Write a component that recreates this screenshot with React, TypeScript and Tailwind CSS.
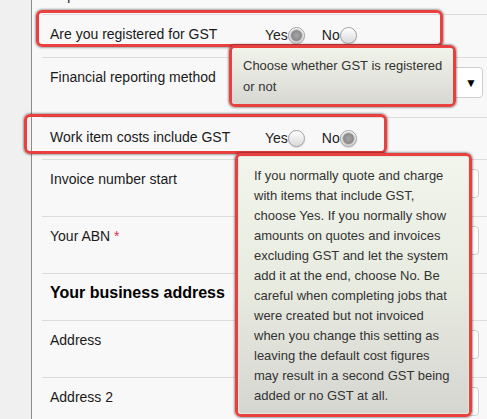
import React from "react";

function Radio({ checked }: { checked?: boolean }) {
  return (
    <span className="inline-flex h-[17px] w-[17px] items-center justify-center rounded-full border border-[#a0a0a0] bg-linear-to-b from-white to-[#dadada] shadow-[0_1px_1px_rgba(0,0,0,0.15)]">
      {checked && (
        <span className="h-[11px] w-[11px] rounded-full bg-radial from-[#a5a5a5] to-[#7c7c7c] shadow-[0_0_0_1px_#c4c4c4]" />
      )}
    </span>
  );
}

function YesNo({ value }: { value: "yes" | "no" }) {
  return (
    <div className="flex items-center pl-[25px] pt-[11px] text-[14px] leading-[18px] text-[#222]">
      <span>Yes</span>
      <Radio checked={value === "yes"} />
      <span className="ml-[17px]">No</span>
      <Radio checked={value === "no"} />
    </div>
  );
}

function TextInput() {
  return <div className="mt-[9px] h-[29px] rounded-[4px] border border-[#cfcfcf] bg-white" />;
}

function Row({
  label,
  height,
  required,
  heading,
  children,
}: {
  label: string;
  height: string;
  required?: boolean;
  heading?: boolean;
  children?: React.ReactNode;
}) {
  return (
    <div className={`flex border-t border-[#dcdcdc] ${height}`}>
      <div
        className={`w-[198px] shrink-0 pl-[8px] pt-[10px] leading-[18px] text-[#1a1a1a] ${
          heading ? "text-[16px] font-bold text-black" : "text-[14px]"
        }`}
      >
        {label}
        {required && <span className="text-[#e0305a]"> *</span>}
      </div>
      <div className="flex-1 pr-[8px]">{children}</div>
    </div>
  );
}

export default function App() {
  return (
    <div className="relative flex h-[419px] w-[487px] overflow-hidden bg-[#f8f8f8] font-['Liberation_Sans',Arial,sans-serif]">
      <aside className="w-[32px] shrink-0 border-r border-[#8c8c8c] bg-[#f0f0f0]" />
      <div className="flex-1 pl-[10px]">
        <div className="h-[14px] overflow-hidden">
          <div className="-mt-[13px] pl-[8px] text-[14px] leading-[16px] text-[#222]">requests</div>
        </div>
        <Row label="Are you registered for GST" height="h-[43px]">
          <YesNo value="yes" />
        </Row>
        <Row label="Financial reporting method" height="h-[60px]">
          <div className="-mr-[4px] mt-[9px] flex h-[31px] items-center justify-end rounded-[4px] border border-[#cfcfcf] bg-white pr-[5px] text-[12px] text-black">
            ▼
          </div>
        </Row>
        <Row label="Work item costs include GST" height="h-[42px]">
          <YesNo value="no" />
        </Row>
        <Row label="Invoice number start" height="h-[57px]">
          <TextInput />
        </Row>
        <Row label="Your ABN" height="h-[57px]" required>
          <TextInput />
        </Row>
        <Row label="Your business address" height="h-[47px]" heading />
        <Row label="Address" height="h-[57px]">
          <TextInput />
        </Row>
        <Row label="Address 2" height="h-[57px]">
          <TextInput />
        </Row>
      </div>

      {/* annotation boxes */}
      <div className="absolute left-[36px] top-[10px] h-[37px] w-[407px] rounded-[6px] border-[3px] border-[#e8403f] shadow-[0_0_2px_1px_rgba(0,0,0,0.35)]" />
      <div className="absolute left-[24px] top-[114px] h-[40px] w-[363px] rounded-[6px] border-[3px] border-[#e8403f] shadow-[0_0_2px_1px_rgba(0,0,0,0.35)]" />

      {/* tooltips */}
      <div className="absolute left-[229px] top-[45px] h-[62px] w-[227px] rounded-[6px] border-[3px] border-[#e8403f] shadow-[0_0_2px_1px_rgba(0,0,0,0.35)]">
        <div className="h-full w-full rounded-[3px] bg-linear-to-b from-[#f1f4ea] to-[#d8d8d2] pl-[11px] pt-[7px] text-[13px] leading-[21px] text-[#333]">
          Choose whether GST is registered
          <br />
          or not
        </div>
      </div>
      <div className="absolute left-[235px] top-[153px] h-[264px] w-[237px] rounded-[6px] border-[3px] border-[#e8403f] shadow-[0_0_2px_1px_rgba(0,0,0,0.35)]">
        <div className="h-full w-full rounded-[3px] border border-[#e4e8dc] bg-linear-to-b from-[#f2f5eb] via-[#e8ebe0] to-[#d6d6d1] pl-[15px] pt-[9px] text-[13px] leading-[20px] text-[#333]">
          If you normally quote and charge
          <br />
          with items that include GST,
          <br />
          choose Yes. If you normally show
          <br />
          amounts on quotes and invoices
          <br />
          excluding GST and let the system
          <br />
          add it at the end, choose No. Be
          <br />
          careful when completing jobs that
          <br />
          were created but not invoiced
          <br />
          when you change this setting as
          <br />
          leaving the default cost figures
          <br />
          may result in a second GST being
          <br />
          added or no GST at all.
        </div>
      </div>
    </div>
  );
}
